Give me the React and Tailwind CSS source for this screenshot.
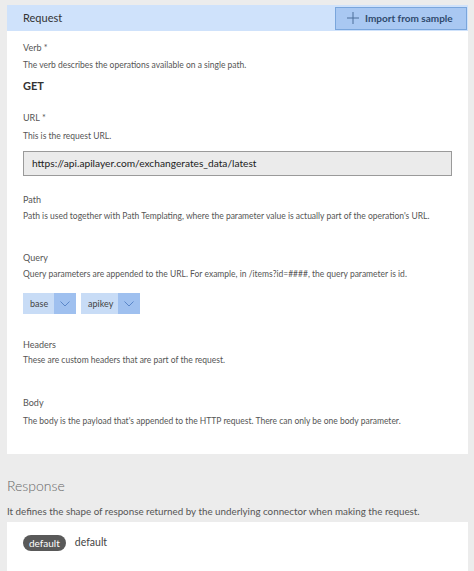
import React from "react";

function Chevron() {
  return (
    <svg width="10" height="6" viewBox="0 0 10 6" fill="none">
      <path d="M0.5 0.5 L5 5 L9.5 0.5" stroke="#5b87c9" strokeWidth="1" />
    </svg>
  );
}

function Chip({ label, w }) {
  return (
    <div className="flex h-[21px]">
      <div className={`flex items-center bg-[#c8dcf6] pl-[7px] text-[9px] text-[#444] ${w}`}>{label}</div>
      <div className="flex w-[22px] items-center justify-center bg-[#9fc0ef]">
        <Chevron />
      </div>
    </div>
  );
}

export default function App() {
  return (
    <div className="h-[571px] w-[474px] overflow-hidden bg-[#ececec] pl-[7px] pr-[6px] pt-[5px] font-['Lato',sans-serif]">
      <div className="bg-white">
        <div className="flex h-[26px] items-center justify-between bg-[#cfe2fb] pl-4 pr-[1px]">
          <span className="text-[11px] text-[#333]">Request</span>
          <div className="flex h-[23px] w-[132px] items-center gap-[6px] whitespace-nowrap border border-[#7aa6dc] bg-[#a9c8f2] pl-[11px]">
            <svg width="12" height="12" viewBox="0 0 12 12" fill="none">
              <path d="M6 0 V12 M0 6 H12" stroke="#4d6f9a" strokeWidth="1" />
            </svg>
            <span className="text-[10px] font-bold text-[#2f4a6d]">Import from sample</span>
          </div>
        </div>
        <div className="flex flex-col px-4 pb-[27px]">
          <div className="mt-[11px] text-[9px] leading-[12px] text-[#555]">Verb *</div>
          <div className="mt-[5px] text-[8.5px] leading-[12px] text-[#555]">The verb describes the operations available on a single path.</div>
          <div className="mt-[8px] text-[11px] font-bold leading-[14px] text-[#333]">GET</div>
          <div className="mt-[19px] text-[9px] leading-[12px] text-[#555]">URL *</div>
          <div className="mt-[6px] text-[8.5px] leading-[12px] text-[#555]">This is the request URL.</div>
          <div className="mt-[9px] flex h-[25px] w-[429px] items-center border border-[#9a9a9a] bg-[#ebebeb] pl-2 text-[10.2px] text-[#222]">
            https://api.apilayer.com/exchangerates_data/latest
          </div>
          <div className="mt-[18px] text-[9px] leading-[12px] text-[#555]">Path</div>
          <div className="mt-[4px] whitespace-nowrap text-[8.5px] leading-[12px] text-[#555]">Path is used together with Path Templating, where the parameter value is actually part of the operation's URL.</div>
          <div className="mt-[30px] text-[9px] leading-[12px] text-[#555]">Query</div>
          <div className="mt-[4px] text-[8.5px] leading-[12px] text-[#555]">Query parameters are appended to the URL. For example, in /items?id=####, the query parameter is id.</div>
          <div className="mt-[13px] flex gap-[5px]">
            <Chip label="base" w="w-[31px]" />
            <Chip label="apikey" w="w-[37px]" />
          </div>
          <div className="mt-[25px] text-[9px] leading-[12px] text-[#555]">Headers</div>
          <div className="mt-[3px] text-[8.5px] leading-[12px] text-[#555]">These are custom headers that are part of the request.</div>
          <div className="mt-[31px] text-[9px] leading-[12px] text-[#555]">Body</div>
          <div className="mt-[6px] text-[8.5px] leading-[12px] text-[#555]">The body is the payload that's appended to the HTTP request. There can only be one body parameter.</div>
        </div>
      </div>
      <div className="mt-[23px] text-[14px] font-light leading-[18px] text-[#666]">Response</div>
      <div className="mt-[10px] whitespace-nowrap text-[9.8px] leading-[12px] text-[#555]">It defines the shape of response returned by the underlying connector when making the request.</div>
      <div className="mt-[5px] h-[60px] bg-white px-4 pt-[13px]">
        <div className="flex items-center gap-[9px]">
          <span className="flex h-[16px] items-center rounded-full bg-[#595959] px-[6px] text-[10px] text-white">default</span>
          <span className="text-[10.5px] text-[#444]">default</span>
        </div>
      </div>
    </div>
  );
}
